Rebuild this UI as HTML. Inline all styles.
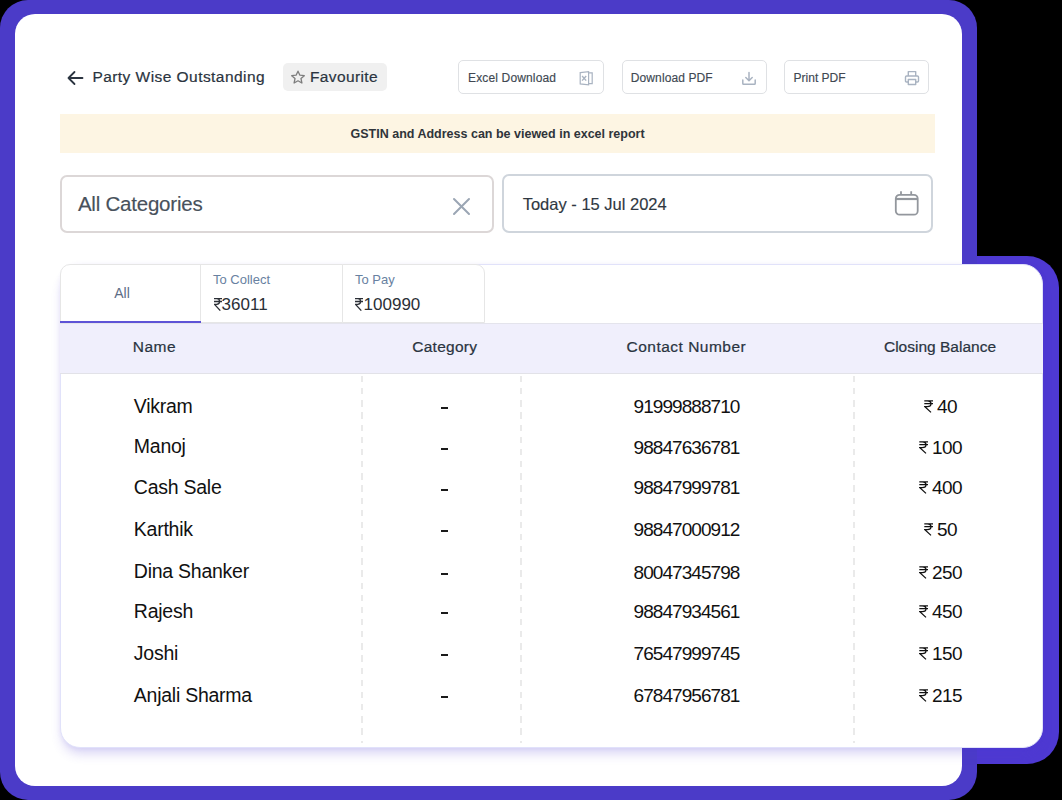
<!DOCTYPE html>
<html>
<head>
<meta charset="utf-8">
<style>
html,body{margin:0;padding:0;}
body{width:1062px;height:800px;background:#000;position:relative;overflow:hidden;font-family:"Liberation Sans",sans-serif;}
.a{position:absolute;}
.t{position:absolute;line-height:1;white-space:nowrap;}
.c{text-align:center;width:400px;}
#p2{left:600px;top:256px;width:459px;height:508px;background:#4e39d2;border-radius:32px;}
#p1{left:0;top:0;width:977px;height:800px;background:#4b3bc8;border-radius:28px;}
#w1{left:15px;top:14px;width:947px;height:771.5px;background:#fff;border-radius:20px;}
.btn{position:absolute;top:60px;height:33.5px;box-sizing:border-box;border:1px solid #dfe1e4;border-radius:5px;background:#fff;}
.btxt{font-size:12px;color:#404852;top:71.8px;-webkit-text-stroke:0.15px #404852;}
#banner{left:60px;top:114px;width:875px;height:39px;background:#fdf5e3;}
#in1{left:60.1px;top:175.3px;width:433.5px;height:57.6px;box-sizing:border-box;border:2px solid #dcd7d7;border-radius:7px;}
#in2{left:502px;top:174px;width:430.8px;height:59px;box-sizing:border-box;border:2px solid #cfd5dc;border-radius:7px;}
#card{left:60px;top:264px;width:983px;height:483.5px;box-sizing:border-box;background:#fff;border:1px solid #e1e2fa;border-radius:20px;box-shadow:0 8px 12px -3px rgba(80,60,210,0.24),0 0 5px rgba(80,60,210,0.07);}
.tab{position:absolute;top:264px;height:59px;box-sizing:border-box;background:#fff;border:1px solid #e6e6e6;}
#hdr{left:60px;top:323px;width:983px;height:51px;box-sizing:border-box;background:#f0effc;border-top:1px solid #e4e4ec;border-bottom:1px solid #e2e2e8;}
.h{font-size:15.5px;font-weight:400;color:#2a3441;top:339.2px;-webkit-text-stroke:0.22px #2a3441;}
.r{font-size:19px;color:#111;}
.dl{position:absolute;top:375.5px;width:2px;height:367px;background:repeating-linear-gradient(to bottom,#eaeaea 0,#eaeaea 6.3px,transparent 6.3px,transparent 12.15px);}
</style>
</head>
<body>
<div id="p2" class="a"></div>
<div id="p1" class="a"></div>
<div id="w1" class="a"></div>

<!-- header -->
<svg class="a" style="left:66px;top:69px" width="18" height="18" viewBox="0 0 18 18"><path d="M16.5 9H2.5M8.5 3L2.5 9L8.5 15" fill="none" stroke="#2b3440" stroke-width="1.8" stroke-linecap="round" stroke-linejoin="round"/></svg>
<div class="t" style="left:92.4px;top:69.3px;font-size:15.5px;letter-spacing:0.45px;color:#2b3440;-webkit-text-stroke:0.2px #2b3440;">Party Wise Outstanding</div>
<div class="a" style="left:283px;top:63px;width:104px;height:28px;background:#f0f0f0;border-radius:5px;"></div>
<svg class="a" style="left:289.5px;top:69.5px" width="16" height="15" viewBox="0 0 16 15"><path d="M8 1.2L9.9 5.2L14.3 5.7L11 8.6L11.9 13L8 10.8L4.1 13L5 8.6L1.7 5.7L6.1 5.2Z" fill="none" stroke="#7d7d7d" stroke-width="1.3" stroke-linejoin="round"/></svg>
<div class="t" style="left:309.9px;top:68.8px;font-size:15.5px;letter-spacing:0.4px;color:#2b3440;-webkit-text-stroke:0.2px #2b3440;">Favourite</div>

<div class="btn" style="left:458px;width:145.5px;"></div>
<div class="t btxt" style="left:468px;letter-spacing:0.15px;">Excel Download</div>
<svg class="a" style="left:578px;top:70px" width="16" height="16" viewBox="0 0 16 16"><g fill="none" stroke="#a9b3c1" stroke-width="1.2"><path d="M2.2 2.6L10.6 1.6V14.8L2.2 13.9Z"/><path d="M10.6 2.8H14.2V13.6H10.6"/><path d="M4.1 6L8.2 10.6M8.2 6L4.1 10.6" stroke-width="1.4"/></g></svg>

<div class="btn" style="left:622px;width:144.5px;"></div>
<div class="t btxt" style="left:630.8px;letter-spacing:0.1px;">Download PDF</div>
<svg class="a" style="left:741px;top:71px" width="16" height="15" viewBox="0 0 16 15"><g fill="none" stroke="#a9b3c1" stroke-width="1.5" stroke-linecap="round" stroke-linejoin="round"><path d="M8 1.5V9.5M4.8 6.5L8 9.7L11.2 6.5"/><path d="M1.8 9V12.5Q1.8 13.3 2.6 13.3H13.4Q14.2 13.3 14.2 12.5V9"/></g></svg>

<div class="btn" style="left:784px;width:145px;"></div>
<div class="t btxt" style="left:793.6px;">Print PDF</div>
<svg class="a" style="left:904px;top:70px" width="16" height="16" viewBox="0 0 16 16"><g fill="none" stroke="#a9b3c1" stroke-width="1.4" stroke-linejoin="round"><path d="M4.3 6V1.6H11.7V6"/><path d="M4.3 12H2.6Q1.5 12 1.5 10.9V7.1Q1.5 6 2.6 6H13.4Q14.5 6 14.5 7.1V10.9Q14.5 12 13.4 12H11.7"/><path d="M4.3 9.5H11.7V14.5H4.3Z"/></g></svg>

<!-- banner -->
<div id="banner" class="a"></div>
<div class="t c" style="left:297.6px;top:128.4px;font-size:12.5px;font-weight:700;color:#2f343a;">GSTIN and Address can be viewed in excel report</div>

<!-- inputs -->
<div id="in1" class="a"></div>
<div class="t" style="left:77.9px;top:194px;font-size:20.5px;letter-spacing:-0.22px;color:#48515b;-webkit-text-stroke:0.15px #48515b;">All Categories</div>
<svg class="a" style="left:452px;top:197px" width="19" height="19" viewBox="0 0 19 19"><path d="M2 2L17 17M17 2L2 17" stroke="#9ba6b4" stroke-width="2" stroke-linecap="round"/></svg>
<div id="in2" class="a"></div>
<div class="t" style="left:522.7px;top:196.2px;font-size:16.5px;color:#2f3842;-webkit-text-stroke:0.15px #2f3842;">Today - 15 Jul 2024</div>
<svg class="a" style="left:893px;top:189px" width="27" height="29" viewBox="0 0 27 29"><g fill="none" stroke="#93979d" stroke-width="1.8"><rect x="2.8" y="5.8" width="21.9" height="19.9" rx="3.8"/><path d="M2.8 10H24.7" stroke-width="2.2"/><path d="M8 2.3V5.8M18.2 2.3V5.8"/></g></svg>

<!-- table card -->
<div id="card" class="a"></div>
<div class="tab" style="left:60px;width:141px;border-radius:10px 0 0 0;"></div>
<div class="tab" style="left:200px;width:143px;"></div>
<div class="tab" style="left:342px;width:143px;border-radius:0 9px 0 0;"></div>
<div class="a" style="left:60px;top:321px;width:141px;height:2px;background:#5e53d6;"></div>
<div class="t c" style="left:-78px;top:285.5px;font-size:14px;color:#5d6d86;">All</div>
<div class="t" style="left:213px;top:273.4px;font-size:13px;color:#6881a1;">To Collect</div>
<div class="t" style="left:355px;top:273.4px;font-size:13px;color:#6881a1;">To Pay</div>
<svg class="a" style="left:213.9px;top:298px" width="8" height="13" viewBox="0 0 8 13"><path d="M0 0.65H8M0 3.5H8M0.3 0.65H2.8C4.8 0.65 5.6 2 5.6 3.6C5.6 5.2 4.6 6.4 2.6 6.4H0.6L6.3 12.6" fill="none" stroke="#2b2f36" stroke-width="1.3"/></svg>
<div class="t" style="left:221.6px;top:296.2px;font-size:17px;letter-spacing:0px;color:#2b2f36;">36011</div>
<svg class="a" style="left:355.4px;top:298px" width="8" height="13" viewBox="0 0 8 13"><path d="M0 0.65H8M0 3.5H8M0.3 0.65H2.8C4.8 0.65 5.6 2 5.6 3.6C5.6 5.2 4.6 6.4 2.6 6.4H0.6L6.3 12.6" fill="none" stroke="#2b2f36" stroke-width="1.3"/></svg>
<div class="t" style="left:363.6px;top:296.2px;font-size:17px;letter-spacing:0px;color:#2b2f36;">100990</div>

<div id="hdr" class="a"></div>
<div class="t h" style="left:132.8px;letter-spacing:0.5px;">Name</div>
<div class="t h c" style="left:244.8px;letter-spacing:0.27px;">Category</div>
<div class="t h c" style="left:486.4px;letter-spacing:0.48px;">Contact Number</div>
<div class="t h c" style="left:740px;letter-spacing:0px;">Closing Balance</div>

<div class="dl" style="left:361px;"></div>
<div class="dl" style="left:520px;"></div>
<div class="dl" style="left:853.2px;"></div>

<div class="t r" style="left:133.8px;top:396.6px;font-size:19.5px;letter-spacing:-0.25px;">Vikram</div>
<div class="a" style="left:441.2px;top:407px;width:6.8px;height:2px;background:#1a1a1a;"></div>
<div class="t r c" style="left:486.5px;top:396.8px;letter-spacing:-0.95px;">91999888710</div>
<div class="t r c" style="left:740.3px;top:396.8px;letter-spacing:-0.6px;"><svg width="9.5" height="13" viewBox="0 0 9.5 13" style="vertical-align:0;margin-right:3.8px"><path d="M0.3 0.8H9.3M0.3 3.6H9.3M0.5 0.8H3.2C5.8 0.8 7 2.1 7 3.7C7 5.4 5.6 6.6 3.2 6.6H0.8L7 12.4" fill="none" stroke="#111" stroke-width="1.3"/></svg>40</div>
<div class="t r" style="left:133.8px;top:437.3px;font-size:19.5px;letter-spacing:-0.25px;">Manoj</div>
<div class="a" style="left:441.2px;top:448px;width:6.8px;height:2px;background:#1a1a1a;"></div>
<div class="t r c" style="left:486.5px;top:437.5px;letter-spacing:-0.95px;">98847636781</div>
<div class="t r c" style="left:740.3px;top:437.5px;letter-spacing:-0.6px;"><svg width="9.5" height="13" viewBox="0 0 9.5 13" style="vertical-align:0;margin-right:3.8px"><path d="M0.3 0.8H9.3M0.3 3.6H9.3M0.5 0.8H3.2C5.8 0.8 7 2.1 7 3.7C7 5.4 5.6 6.6 3.2 6.6H0.8L7 12.4" fill="none" stroke="#111" stroke-width="1.3"/></svg>100</div>
<div class="t r" style="left:133.8px;top:478.2px;font-size:19.5px;letter-spacing:-0.25px;">Cash Sale</div>
<div class="a" style="left:441.2px;top:489px;width:6.8px;height:2px;background:#1a1a1a;"></div>
<div class="t r c" style="left:486.5px;top:478.4px;letter-spacing:-0.95px;">98847999781</div>
<div class="t r c" style="left:740.3px;top:478.4px;letter-spacing:-0.6px;"><svg width="9.5" height="13" viewBox="0 0 9.5 13" style="vertical-align:0;margin-right:3.8px"><path d="M0.3 0.8H9.3M0.3 3.6H9.3M0.5 0.8H3.2C5.8 0.8 7 2.1 7 3.7C7 5.4 5.6 6.6 3.2 6.6H0.8L7 12.4" fill="none" stroke="#111" stroke-width="1.3"/></svg>400</div>
<div class="t r" style="left:133.8px;top:519.9px;font-size:19.5px;letter-spacing:-0.25px;">Karthik</div>
<div class="a" style="left:441.2px;top:530px;width:6.8px;height:2px;background:#1a1a1a;"></div>
<div class="t r c" style="left:486.5px;top:520.1px;letter-spacing:-0.95px;">98847000912</div>
<div class="t r c" style="left:740.3px;top:520.1px;letter-spacing:-0.6px;"><svg width="9.5" height="13" viewBox="0 0 9.5 13" style="vertical-align:0;margin-right:3.8px"><path d="M0.3 0.8H9.3M0.3 3.6H9.3M0.5 0.8H3.2C5.8 0.8 7 2.1 7 3.7C7 5.4 5.6 6.6 3.2 6.6H0.8L7 12.4" fill="none" stroke="#111" stroke-width="1.3"/></svg>50</div>
<div class="t r" style="left:133.8px;top:562.3px;font-size:19.5px;letter-spacing:-0.25px;">Dina Shanker</div>
<div class="a" style="left:441.2px;top:573px;width:6.8px;height:2px;background:#1a1a1a;"></div>
<div class="t r c" style="left:486.5px;top:562.5px;letter-spacing:-0.95px;">80047345798</div>
<div class="t r c" style="left:740.3px;top:562.5px;letter-spacing:-0.6px;"><svg width="9.5" height="13" viewBox="0 0 9.5 13" style="vertical-align:0;margin-right:3.8px"><path d="M0.3 0.8H9.3M0.3 3.6H9.3M0.5 0.8H3.2C5.8 0.8 7 2.1 7 3.7C7 5.4 5.6 6.6 3.2 6.6H0.8L7 12.4" fill="none" stroke="#111" stroke-width="1.3"/></svg>250</div>
<div class="t r" style="left:133.8px;top:602.1px;font-size:19.5px;letter-spacing:-0.25px;">Rajesh</div>
<div class="a" style="left:441.2px;top:612px;width:6.8px;height:2px;background:#1a1a1a;"></div>
<div class="t r c" style="left:486.5px;top:602.3px;letter-spacing:-0.95px;">98847934561</div>
<div class="t r c" style="left:740.3px;top:602.3px;letter-spacing:-0.6px;"><svg width="9.5" height="13" viewBox="0 0 9.5 13" style="vertical-align:0;margin-right:3.8px"><path d="M0.3 0.8H9.3M0.3 3.6H9.3M0.5 0.8H3.2C5.8 0.8 7 2.1 7 3.7C7 5.4 5.6 6.6 3.2 6.6H0.8L7 12.4" fill="none" stroke="#111" stroke-width="1.3"/></svg>450</div>
<div class="t r" style="left:133.8px;top:643.7px;font-size:19.5px;letter-spacing:-0.25px;">Joshi</div>
<div class="a" style="left:441.2px;top:654px;width:6.8px;height:2px;background:#1a1a1a;"></div>
<div class="t r c" style="left:486.5px;top:643.9px;letter-spacing:-0.95px;">76547999745</div>
<div class="t r c" style="left:740.3px;top:643.9px;letter-spacing:-0.6px;"><svg width="9.5" height="13" viewBox="0 0 9.5 13" style="vertical-align:0;margin-right:3.8px"><path d="M0.3 0.8H9.3M0.3 3.6H9.3M0.5 0.8H3.2C5.8 0.8 7 2.1 7 3.7C7 5.4 5.6 6.6 3.2 6.6H0.8L7 12.4" fill="none" stroke="#111" stroke-width="1.3"/></svg>150</div>
<div class="t r" style="left:133.8px;top:685.8px;font-size:19.5px;letter-spacing:-0.25px;">Anjali Sharma</div>
<div class="a" style="left:441.2px;top:696px;width:6.8px;height:2px;background:#1a1a1a;"></div>
<div class="t r c" style="left:486.5px;top:686.0px;letter-spacing:-0.95px;">67847956781</div>
<div class="t r c" style="left:740.3px;top:686.0px;letter-spacing:-0.6px;"><svg width="9.5" height="13" viewBox="0 0 9.5 13" style="vertical-align:0;margin-right:3.8px"><path d="M0.3 0.8H9.3M0.3 3.6H9.3M0.5 0.8H3.2C5.8 0.8 7 2.1 7 3.7C7 5.4 5.6 6.6 3.2 6.6H0.8L7 12.4" fill="none" stroke="#111" stroke-width="1.3"/></svg>215</div>
</body>
</html>
